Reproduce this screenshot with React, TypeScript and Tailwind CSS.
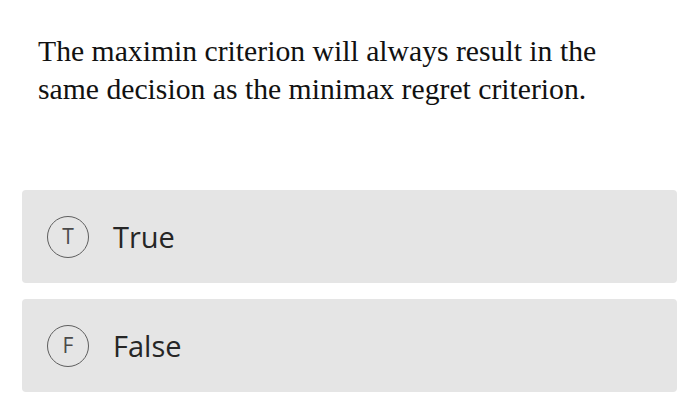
import React from "react";

function Option({ letter, label }: { letter: string; label: string }) {
  return (
    <div className="flex h-[93px] items-center rounded-[4px] bg-[#e5e5e5] pl-[25px]">
      <div className="flex h-[42px] w-[42px] items-center justify-center rounded-full border-[1.5px] border-[#5e5e5e] text-[21px] leading-none text-[#4a4a4a] [font-family:'Open_Sans',sans-serif]">
        {letter}
      </div>
      <div className="ml-[24px] text-[29px] text-[#262626] [font-family:'Open_Sans',sans-serif]">
        {label}
      </div>
    </div>
  );
}

export default function App() {
  return (
    <div className="h-[407px] w-[700px] bg-white">
      <div className="pl-[38px] pt-[32px] text-[29.7px] leading-[38px] text-[#111111] [font-family:'Liberation_Serif',serif]">
        <div>The maximin criterion will always result in the</div>
        <div>same decision as the minimax regret criterion.</div>
      </div>
      <div className="ml-[22px] mt-[82px] flex w-[655px] flex-col gap-[16px]">
        <Option letter="T" label="True" />
        <Option letter="F" label="False" />
      </div>
    </div>
  );
}
